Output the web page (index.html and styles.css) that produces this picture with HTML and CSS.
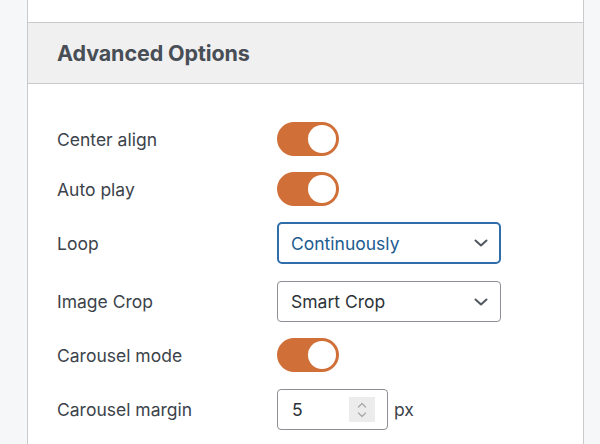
FILE: index.html
```html
<!DOCTYPE html>
<html>
<head>
<meta charset="utf-8">
<link rel="stylesheet" href="styles.css">
</head>
<body>
<div class="panel">
  <div class="panel-top"></div>
  <div class="panel-header"><h2 class="panel-title">Advanced Options</h2></div>
  <div class="panel-body">
    <div class="row row-toggle">
      <span class="label">Center align</span>
      <span class="toggle"><span class="knob"></span></span>
    </div>
    <div class="row row-toggle">
      <span class="label">Auto play</span>
      <span class="toggle"><span class="knob"></span></span>
    </div>
    <div class="row row-select">
      <span class="label">Loop</span>
      <div class="select select-focus">
        <span class="select-text">Continuously</span>
        <svg class="chev" width="14" height="8" viewBox="0 0 14 8"><path d="M1.5 1.5 L7 6.5 L12.5 1.5" fill="none" stroke="#50575e" stroke-width="2" stroke-linecap="round" stroke-linejoin="round"/></svg>
      </div>
    </div>
    <div class="row row-select2">
      <span class="label">Image Crop</span>
      <div class="select">
        <span class="select-text">Smart Crop</span>
        <svg class="chev" width="14" height="8" viewBox="0 0 14 8"><path d="M1.5 1.5 L7 6.5 L12.5 1.5" fill="none" stroke="#50575e" stroke-width="2" stroke-linecap="round" stroke-linejoin="round"/></svg>
      </div>
    </div>
    <div class="row row-toggle">
      <span class="label">Carousel mode</span>
      <span class="toggle"><span class="knob"></span></span>
    </div>
    <div class="row row-number">
      <span class="label">Carousel margin</span>
      <div class="number">
        <span class="number-text">5</span>
        <span class="spinner">
          <svg width="12" height="18" viewBox="0 0 12 18"><path d="M2.5 6 L6 2.5 L9.5 6" fill="none" stroke="#a7aaad" stroke-width="1.4" stroke-linecap="round" stroke-linejoin="round"/><path d="M2.5 12 L6 15.5 L9.5 12" fill="none" stroke="#a7aaad" stroke-width="1.4" stroke-linecap="round" stroke-linejoin="round"/></svg>
        </span>
      </div>
      <span class="unit">px</span>
    </div>
  </div>
</div>
</body>
</html>
```

FILE: styles.css
```css
html, body {
  margin: 0;
  padding: 0;
}
body {
  background: #f6f7f8;
  width: 600px;
  height: 444px;
  overflow: hidden;
  font-family: "Inter", "Liberation Sans", sans-serif;
}
.panel {
  margin-left: 27px;
  width: 555px;
  height: 444px;
  background: #fff;
  border-left: 1px solid #c9cacd;
  border-right: 1px solid #c9cacd;
}
.panel-top {
  height: 22px;
}
.panel-header {
  height: 60px;
  background: #f0f0f1;
  border-top: 1px solid #c9cacd;
  border-bottom: 1px solid #c9cacd;
  display: flex;
  align-items: center;
  padding-left: 29px;
}
.panel-title {
  margin: 0;
  font-size: 21.5px;
  font-weight: 700;
  color: #484e55;
  letter-spacing: -0.1px;
}
.panel-body {
  padding: 38px 0 0 29px;
  display: flex;
  flex-direction: column;
  gap: 16px;
}
.row {
  display: flex;
  align-items: center;
}
.label {
  width: 220px;
  font-size: 17.5px;
  color: #3c434a;
}
.row-select2, .row-number { margin-top: 1px; }
.toggle {
  width: 62px;
  height: 34px;
  border-radius: 17px;
  background: #d06f37;
  display: flex;
  align-items: center;
  justify-content: flex-end;
  padding-right: 3px;
  box-sizing: border-box;
}
.knob {
  width: 28px;
  height: 28px;
  border-radius: 50%;
  background: #fff;
}
.select {
  width: 224px;
  height: 41px;
  box-sizing: border-box;
  border: 1px solid #8c8f94;
  border-radius: 4px;
  display: flex;
  align-items: center;
  justify-content: space-between;
  padding: 0 12px 0 13px;
  font-size: 17.5px;
  color: #2c3338;
}
.select-focus {
  height: 42px;
  border: 2px solid #2f6eaa;
  border-radius: 5px;
  padding-left: 12px;
  color: #215b90;
  padding-right: 11px;
}
.number {
  width: 111px;
  height: 41px;
  box-sizing: border-box;
  border: 1px solid #8c8f94;
  border-radius: 4px;
  display: flex;
  align-items: center;
  justify-content: space-between;
  padding: 0 12px 0 14px;
  font-size: 17.5px;
  color: #2c3338;
}
.spinner {
  width: 26px;
  height: 25px;
  background: #ececed;
  display: flex;
  align-items: center;
  justify-content: center;
}
.unit {
  margin-left: 6px;
  font-size: 17.5px;
  color: #3c434a;
}
```
